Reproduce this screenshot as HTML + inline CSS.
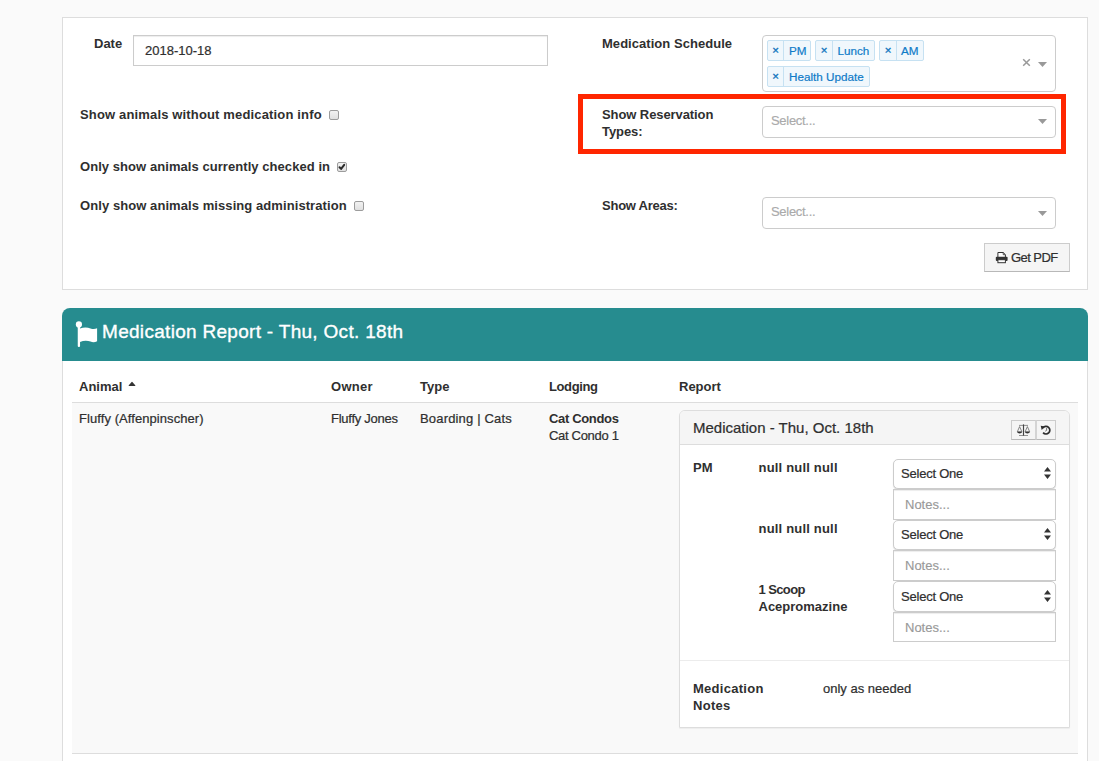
<!DOCTYPE html>
<html>
<head>
<meta charset="utf-8">
<title>Medication Report</title>
<style>
*{box-sizing:border-box;margin:0;padding:0}
html,body{width:1099px;height:761px;overflow:hidden}
body{background:#fafafa;font-family:"Liberation Sans",sans-serif;font-size:13px;color:#333;position:relative}
.abs{position:absolute}
.b{font-weight:bold}
.t{position:absolute;white-space:nowrap;line-height:17px;color:#2f2f2f;-webkit-text-stroke:.22px #2f2f2f}
.t.b{-webkit-text-stroke:0}
.panel1{left:62px;top:17px;width:1026px;height:273px;background:#fff;border:1px solid #ddd}
.input{background:#fff;border:1px solid #ccc;box-shadow:inset 0 1px 1px rgba(0,0,0,.075)}
.sel{background:#fff;border:1px solid #ccc;border-radius:4px}
.nn{color:#999;-webkit-text-stroke:.15px #999}
.ph{color:#aaa;-webkit-text-stroke:.15px #aaa}
.arrow{position:absolute;width:9px;height:5px}
.tag{position:absolute;height:21px;border:1px solid #c6e1f2;background:#f0f7fc;border-radius:2px;color:#0f7bc8;font-size:11.7px;line-height:19px}
.tag .x{position:absolute;left:0;top:0;width:16px;height:19px;border-right:1px solid #c6e1f2;text-align:center;font-size:11.5px;line-height:19px;-webkit-text-stroke:.35px #0f6fb8}
.tag .x.w{width:17px}
.tag .l{position:absolute;left:21px;top:0;white-space:nowrap;color:#0f7bc8;-webkit-text-stroke:.2px #0f7bc8}
.cb{position:absolute;width:10px;height:10px;border:1px solid #9c9c9c;border-radius:2px;background:linear-gradient(#f2f2f2,#e0e0e0)}
.hdr{left:62px;top:308px;width:1026px;height:53px;background:#268c8f;border-radius:8px 8px 0 0}
.body2{left:62px;top:361px;width:1026px;height:410px;background:#fff;border-left:1px solid #ddd;border-right:1px solid #ddd}
.row{left:72px;top:402px;width:1006px;height:352px;background:#f9f9f9;border-top:1px solid #ddd;border-bottom:1px solid #ddd}
.ip{left:679px;top:410px;width:391px;height:318px;background:#fff;border:1px solid #ddd;border-radius:6px 6px 1px 1px;box-shadow:0 1px 1px rgba(0,0,0,.05)}
.iph{left:680px;top:411px;width:389px;height:34px;background:#f5f5f5;border-bottom:1px solid #ddd;border-radius:5px 5px 0 0}
.ipf{left:680px;top:660px;width:389px;height:1px;background:#ececec}
.so{position:absolute;left:893px;width:163px;height:30px;background:#fff;border:1px solid #ccc;border-radius:5px;box-shadow:0 1px 1px rgba(0,0,0,.14)}
.nt{position:absolute;left:893px;width:163px;height:31px;background:#fff;border:1px solid #ccc;box-shadow:inset 0 1px 1px rgba(0,0,0,.075)}
.btn{background:#f5f5f5;border:1px solid #ccc;border-bottom-color:#b8b8b8}
.ud{position:absolute;left:1044px;width:7px;height:12px}
</style>
</head>
<body>
<!-- filter panel -->
<div class="abs panel1"></div>
<div class="t b" style="left:94px;top:35px">Date</div>
<div class="abs input" style="left:133px;top:35px;width:415px;height:31px"></div>
<div class="t" style="left:145px;top:42px">2018-10-18</div>

<div class="t b" style="left:80px;top:106px;letter-spacing:.155px">Show animals without medication info</div>
<div class="cb" style="left:329px;top:110px"></div>
<div class="t b" style="left:80px;top:158px;letter-spacing:.06px">Only show animals currently checked in</div>
<div class="cb" style="left:337px;top:162px"></div>
<svg class="abs" style="left:337px;top:162px" width="10" height="10" viewBox="0 0 10 10"><path d="M2.5 5.2 L4.1 6.9 L7.2 2.9" fill="none" stroke="#2a2a2a" stroke-width="2" stroke-linecap="round" stroke-linejoin="round"/></svg>
<div class="t b" style="left:80px;top:197px;letter-spacing:.075px">Only show animals missing administration</div>
<div class="cb" style="left:354px;top:201px"></div>

<div class="t b" style="left:602px;top:35px;letter-spacing:.04px">Medication Schedule</div>
<div class="abs sel" style="left:762px;top:35px;width:294px;height:57px"></div>
<div class="tag" style="left:767px;top:40px;width:44px"><span class="x">×</span><span class="l">PM</span></div>
<div class="tag" style="left:815px;top:40px;width:60px"><span class="x w">×</span><span class="l" style="left:21.5px">Lunch</span></div>
<div class="tag" style="left:879px;top:40px;width:45px"><span class="x w">×</span><span class="l">AM</span></div>
<div class="tag" style="left:767px;top:66px;width:103px"><span class="x">×</span><span class="l">Health Update</span></div>
<svg class="abs" style="left:1022px;top:58px" width="9" height="9" viewBox="0 0 9 9"><path d="M1.2 1.2 L7.8 7.8 M7.8 1.2 L1.2 7.8" stroke="#999" stroke-width="1.5" fill="none"/></svg>
<svg class="arrow" style="left:1038px;top:62px" viewBox="0 0 9 5"><path d="M0 0 L9 0 L4.5 5 Z" fill="#999"/></svg>

<!-- red highlight -->
<div class="abs" style="left:578px;top:94px;width:488px;height:60px;border:5px solid #ff2600"></div>
<div class="t b" style="left:602px;top:106px;letter-spacing:-.085px">Show Reservation<br>Types:</div>
<div class="abs sel" style="left:762px;top:106px;width:294px;height:32px"></div>
<div class="t ph" style="left:771px;top:112px;letter-spacing:-.3px">Select...</div>
<svg class="arrow" style="left:1038px;top:119px" viewBox="0 0 9 5"><path d="M0 0 L9 0 L4.5 5 Z" fill="#999"/></svg>

<div class="t b" style="left:602px;top:197px;letter-spacing:-.24px">Show Areas:</div>
<div class="abs sel" style="left:762px;top:197px;width:294px;height:32px"></div>
<div class="t ph" style="left:771px;top:203px;letter-spacing:-.3px">Select...</div>
<svg class="arrow" style="left:1038px;top:211px" viewBox="0 0 9 5"><path d="M0 0 L9 0 L4.5 5 Z" fill="#999"/></svg>

<div class="abs btn" style="left:984px;top:243px;width:86px;height:29px"></div>
<svg class="abs" style="left:995px;top:251px" width="14" height="13" viewBox="0 0 14 13">
<path d="M2.9 6 V1.5 H8.2 L10.4 3.7 V6" fill="#fff" stroke="#333" stroke-width="1"/>
<path d="M8.2 1.5 V3.7 H10.4" fill="none" stroke="#333" stroke-width=".8"/>
<rect x=".8" y="5.8" width="11.8" height="4.2" rx="1" fill="#333"/>
<rect x="2.9" y="8.7" width="7.5" height="3" fill="#fff" stroke="#333" stroke-width="1"/>
</svg>
<div class="t" style="left:1011px;top:249px;letter-spacing:-.55px">Get PDF</div>

<!-- report panel -->
<div class="abs hdr"></div>
<svg class="abs" style="left:72px;top:318px" width="30" height="32" viewBox="72 318 30 32">
<circle cx="78.9" cy="324.4" r="3.1" fill="#fff"/>
<rect x="77.75" y="324" width="2.3" height="23" rx="1" fill="#fff"/>
<path d="M80 328.4 C83.5 327.2 87.5 327.2 90.5 328.4 C92.8 329.3 95 329.2 97.1 328.3 L97.1 341.3 C95 342.3 92.8 342.5 90.5 341.6 C87.5 340.4 83.5 340.5 80 341.9 Z" fill="#fff"/>
</svg>
<div class="t" style="left:102px;top:320px;font-size:19px;line-height:24px;color:#fff;letter-spacing:.3px;-webkit-text-stroke:.35px #fff">Medication Report - Thu, Oct. 18th</div>
<div class="abs body2"></div>
<div class="t b" style="left:79px;top:378px">Animal</div>
<svg class="abs" style="left:128px;top:381px" width="8" height="6" viewBox="0 0 8 6"><path d="M.6 4.6 L3.6 1 Q4 .6 4.4 1 L7.4 4.6 Q7.6 5 7 5 L1 5 Q.4 5 .6 4.6 Z" fill="#333"/></svg>
<div class="t b" style="left:331px;top:378px;letter-spacing:.27px">Owner</div>
<div class="t b" style="left:420px;top:378px">Type</div>
<div class="t b" style="left:549px;top:378px;letter-spacing:-.38px">Lodging</div>
<div class="t b" style="left:679px;top:378px">Report</div>
<div class="abs row"></div>
<div class="t" style="left:79px;top:410px;letter-spacing:.07px">Fluffy (Affenpinscher)</div>
<div class="t" style="left:331px;top:410px;letter-spacing:-.26px">Fluffy Jones</div>
<div class="t" style="left:420px;top:410px;letter-spacing:.17px">Boarding | Cats</div>
<div class="t b" style="left:549px;top:410px;letter-spacing:-.34px">Cat Condos</div>
<div class="t" style="left:549px;top:427px;letter-spacing:-.31px">Cat Condo 1</div>

<div class="abs ip"></div>
<div class="abs iph"></div>
<div class="t" style="left:693px;top:419px;font-size:15px">Medication - Thu, Oct. 18th</div>
<div class="abs btn" style="left:1011px;top:420px;width:25px;height:20px;border-right-color:#d4d4d4"></div>
<div class="abs btn" style="left:1036px;top:420px;width:20px;height:20px;border-left-color:#d4d4d4"></div>
<!-- balance scale -->
<svg class="abs" style="left:1016px;top:423px" width="16" height="14" viewBox="1016 423 16 14">
<path d="M1019 425.4 H1028 M1019 435.5 H1028" stroke="#666" stroke-width=".7" fill="none"/>
<path d="M1023.5 424.4 V435.6" stroke="#444" stroke-width="1.15" fill="none"/>
<path d="M1019.6 426.6 L1017.3 431.8 H1021.9 Z M1027.4 426.6 L1025.1 431.8 H1029.7 Z" stroke="#555" stroke-width=".7" fill="none"/>
<path d="M1017 431.8 H1022.2 Q1021.6 433.4 1019.6 433.4 Q1017.6 433.4 1017 431.8 Z M1024.8 431.8 H1030 Q1029.4 433.4 1027.4 433.4 Q1025.4 433.4 1024.8 431.8 Z" fill="#333"/>
</svg>
<!-- history -->
<svg class="abs" style="left:1039px;top:423px" width="15" height="14" viewBox="1039 423 15 14">
<path d="M1043 427.9 A3.8 3.8 0 1 1 1043.1 432.6" stroke="#2c2c2c" stroke-width="1.7" fill="none"/>
<path d="M1040.7 425.7 L1045 426.5 L1041.7 430 Z" fill="#2c2c2c"/>
<path d="M1046.6 428 V430.4 L1045.2 431.2" stroke="#555" stroke-width=".8" fill="none"/>
</svg>

<div class="t b" style="left:693px;top:459px">PM</div>
<div class="t b" style="left:758.5px;top:459px;letter-spacing:.19px">null null null</div>
<div class="so" style="top:459px"></div><div class="t" style="left:901px;top:465px;letter-spacing:-.22px">Select One</div>
<svg class="ud" style="top:467px" viewBox="0 0 7 12"><path d="M3.5 0 L7 4.6 H0 Z M0 7.4 H7 L3.5 12 Z" fill="#333"/></svg>
<div class="nt" style="top:489px"></div><div class="t nn" style="left:905px;top:496px">Notes...</div>
<div class="t b" style="left:758.5px;top:520px;letter-spacing:.19px">null null null</div>
<div class="so" style="top:520px"></div><div class="t" style="left:901px;top:526px;letter-spacing:-.22px">Select One</div>
<svg class="ud" style="top:528px" viewBox="0 0 7 12"><path d="M3.5 0 L7 4.6 H0 Z M0 7.4 H7 L3.5 12 Z" fill="#333"/></svg>
<div class="nt" style="top:550px"></div><div class="t nn" style="left:905px;top:557px">Notes...</div>
<div class="t b" style="left:758.5px;top:581px"><span style="letter-spacing:-.6px">1 Scoop</span><br>Acepromazine</div>
<div class="so" style="top:581px;height:31px"></div><div class="t" style="left:901px;top:587.5px;letter-spacing:-.22px">Select One</div>
<svg class="ud" style="top:589.5px" viewBox="0 0 7 12"><path d="M3.5 0 L7 4.6 H0 Z M0 7.4 H7 L3.5 12 Z" fill="#333"/></svg>
<div class="nt" style="top:612px;height:30px"></div><div class="t nn" style="left:905px;top:618.5px">Notes...</div>

<div class="abs ipf"></div>
<div class="t b" style="left:693px;top:680px;letter-spacing:.28px">Medication<br>Notes</div>
<div class="t" style="left:823px;top:680px">only as needed</div>
</body>
</html>
